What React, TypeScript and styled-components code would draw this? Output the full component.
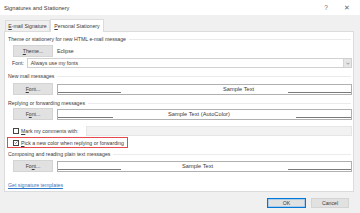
import styled, { createGlobalStyle } from 'styled-components';

const GlobalStyle = createGlobalStyle`
  html, body {
    margin: 0;
    padding: 0;
  }
  body {
    width: 360px;
    height: 213px;
    overflow: hidden;
    background: #f0f0f0;
    font-family: "Liberation Sans", Arial, sans-serif;
    font-size: 5.2px;
    color: #333;
  }
  * {
    box-sizing: border-box;
  }
`;

const Dialog = styled.div`
  width: 360px;
  height: 213px;
  display: flex;
  flex-direction: column;
  background: #f0f0f0;
`;

const TitleBar = styled.div`
  height: 15px;
  flex-shrink: 0;
  display: flex;
  align-items: center;
  gap: 1px;
  padding: 0 3px 0 4px;
  background: #ffffff;
`;

const Title = styled.span`
  flex: 1;
  font-size: 5.7px;
  color: #3a3a3a;
`;

const TitleButton = styled.span`
  width: 20px;
  text-align: center;
  font-size: 6.5px;
  color: #666;
`;

const Body = styled.div`
  flex: 1;
  display: flex;
  flex-direction: column;
  padding: 4px 6px 0 4px;
`;

const TabBar = styled.div`
  display: flex;
  align-items: flex-end;
  height: 12px;
  padding-left: 1px;
`;

const Tab = styled.div<{ $active?: boolean; $w: number }>`
  width: ${(p) => p.$w}px;
  height: ${(p) => (p.$active ? 13 : 11)}px;
  display: flex;
  align-items: center;
  justify-content: center;
  background: ${(p) => (p.$active ? '#ffffff' : '#f0f0f0')};
  border: 1px solid #dcdcdc;
  border-bottom: none;
  margin-bottom: ${(p) => (p.$active ? -1 : 0)}px;
  position: relative;
  z-index: ${(p) => (p.$active ? 1 : 0)};
  color: #3a3a3a;
`;

const Panel = styled.div`
  height: 161px;
  display: flex;
  flex-direction: column;
  background: #ffffff;
  border: 1px solid #dcdcdc;
  padding: 1px 1px 0 3px;
`;

const GroupHeader = styled.div<{ $mt: number }>`
  height: 10px;
  margin-top: ${(p) => p.$mt}px;
  display: flex;
  align-items: center;
  gap: 3px;
  color: #3a3a3a;
  &::after {
    content: '';
    flex: 1;
    height: 1px;
    margin-right: 1px;
    background: #ebebeb;
  }
`;

const Row = styled.div<{ $mt: number; $h: number; $ml?: number; $gap?: number }>`
  height: ${(p) => p.$h}px;
  margin-top: ${(p) => p.$mt}px;
  margin-left: ${(p) => p.$ml ?? 5}px;
  display: flex;
  align-items: center;
  gap: ${(p) => p.$gap ?? 4}px;
`;

const Button = styled.div<{ $w: number; $h?: number; $default?: boolean }>`
  width: ${(p) => p.$w}px;
  height: ${(p) => p.$h ?? 12}px;
  flex-shrink: 0;
  display: flex;
  align-items: center;
  justify-content: center;
  background: #e1e1e1;
  border: 1px solid ${(p) => (p.$default ? '#0078d7' : '#d4d4d4')};
  box-shadow: ${(p) => (p.$default ? 'inset 0 0 0 0.5px #7ab4ea' : 'none')};
  color: #3a3a3a;
`;

const Key = styled.span`
  text-decoration: underline;
  text-underline-offset: 0.5px;
  text-decoration-thickness: 0.5px;
`;

const Label = styled.span`
  color: #3a3a3a;
  white-space: nowrap;
`;

const Combo = styled.div`
  flex: 1;
  height: 10px;
  display: flex;
  align-items: center;
  padding: 0 0 0 3px;
  border: 1px solid #d0d0d0;
  background: #ffffff;
`;

const ComboText = styled.span`
  flex: 1;
  color: #3a3a3a;
`;

const ComboArrow = styled.div`
  width: 8px;
  height: 8px;
  display: flex;
  align-items: center;
  justify-content: center;
  background: #e5e5e5;
  border-left: 1px solid #d4d4d4;
`;

const SampleBox = styled.div<{ $pad: number; $line: number }>`
  flex: 1;
  height: 11px;
  position: relative;
  display: flex;
  align-items: center;
  padding-left: ${(p) => p.$pad}px;
  border: 1px solid #b0b0b0;
  background: #ffffff;
  font-size: 5.7px;
  color: #3a3a3a;
  &::before,
  &::after {
    content: '';
    position: absolute;
    bottom: 1px;
    width: ${(p) => p.$line}px;
    height: 1px;
    background: #7a7a7a;
  }
  &::before {
    left: 0;
  }
  &::after {
    right: 0;
  }
`;

const CheckBox = styled.span`
  width: 6px;
  height: 6px;
  flex-shrink: 0;
  display: flex;
  align-items: center;
  justify-content: center;
  border: 1px solid #444;
  background: #fff;
`;

const CheckRow = styled.div<{ $mt: number; $h: number }>`
  height: ${(p) => p.$h}px;
  margin-top: ${(p) => p.$mt}px;
  margin-left: 5px;
  display: flex;
  align-items: center;
  gap: 2px;
`;

const DisabledBox = styled.div`
  flex: 1;
  height: 10px;
  margin-left: 6px;
  background: #f2f2f2;
  border: 1px solid #e6e6e6;
`;

const Highlight = styled.div`
  width: 121px;
  height: 11px;
  margin-top: 1px;
  margin-left: -1px;
  display: flex;
  align-items: center;
  gap: 2px;
  padding-left: 5px;
  border: 1px solid #e5484d;
`;

const Link = styled.a`
  display: block;
  height: 10px;
  line-height: 10px;
  margin-top: 8px;
  color: #2f78c4;
  text-decoration: underline;
  text-decoration-thickness: 0.5px;
  text-underline-offset: 0.7px;
  align-self: flex-start;
`;

const Footer = styled.div`
  display: flex;
  justify-content: flex-end;
  gap: 5px;
  padding: 6px 5px 0 0;
`;

const Check = () => (
  <svg width="5" height="5" viewBox="0 0 10 10">
    <path d="M1.5 5.2 L4 7.7 L8.7 2.3" fill="none" stroke="#333" strokeWidth="1.3" />
  </svg>
);

const ChevronDown = () => (
  <svg width="4" height="3" viewBox="0 0 8 6">
    <path d="M1 1.5 L4 4.5 L7 1.5" fill="none" stroke="#666" strokeWidth="1.2" />
  </svg>
);

const App = () => {
  return (
    <Dialog>
      <GlobalStyle />
      <TitleBar>
        <Title>Signatures and Stationery</Title>
        <TitleButton>?</TitleButton>
        <TitleButton>✕</TitleButton>
      </TitleBar>
      <Body>
        <TabBar>
          <Tab $w={45}>
            <span>
              <Key>E</Key>-mail Signature
            </span>
          </Tab>
          <Tab $w={54} $active>
            <span>
              <Key>P</Key>ersonal Stationery
            </span>
          </Tab>
        </TabBar>
        <Panel>
          <GroupHeader $mt={1}>Theme or stationery for new HTML e-mail message</GroupHeader>
          <Row $mt={1} $h={12}>
            <Button $w={40}>
              <span>
                <Key>T</Key>heme...
              </span>
            </Button>
            <Label>Eclipse</Label>
          </Row>
          <Row $mt={1} $h={10} $ml={4} $gap={3}>
            <Label>Font:</Label>
            <Combo>
              <ComboText>Always use my fonts</ComboText>
              <ComboArrow>
                <ChevronDown />
              </ComboArrow>
            </Combo>
          </Row>

          <GroupHeader $mt={3}>New mail messages</GroupHeader>
          <Row $mt={2} $h={12}>
            <Button $w={40}>
              <span>
                <Key>F</Key>ont...
              </span>
            </Button>
            <SampleBox $pad={165} $line={63}>Sample Text</SampleBox>
          </Row>

          <GroupHeader $mt={3}>Replying or forwarding messages</GroupHeader>
          <Row $mt={0} $h={12}>
            <Button $w={40}>
              <span>
                F<Key>o</Key>nt...
              </span>
            </Button>
            <SampleBox $pad={110} $line={55}>Sample Text (AutoColor)</SampleBox>
          </Row>

          <CheckRow $mt={6} $h={10}>
            <CheckBox />
            <Label>
              <Key>M</Key>ark my comments with:
            </Label>
            <DisabledBox />
          </CheckRow>
          <Highlight>
            <CheckBox>
              <Check />
            </CheckBox>
            <Label>
              <Key>P</Key>ick a new color when replying or forwarding
            </Label>
          </Highlight>

          <GroupHeader $mt={1}>Composing and reading plain text messages</GroupHeader>
          <Row $mt={1} $h={12}>
            <Button $w={40}>
              <span>
                Fo<Key>n</Key>t...
              </span>
            </Button>
            <SampleBox $pad={124} $line={63}>Sample Text</SampleBox>
          </Row>

          <Link>Get signature templates</Link>
        </Panel>
        <Footer>
          <Button $w={39} $h={10} $default>
            OK
          </Button>
          <Button $w={38} $h={10}>
            Cancel
          </Button>
        </Footer>
      </Body>
    </Dialog>
  );
};

export default App;
